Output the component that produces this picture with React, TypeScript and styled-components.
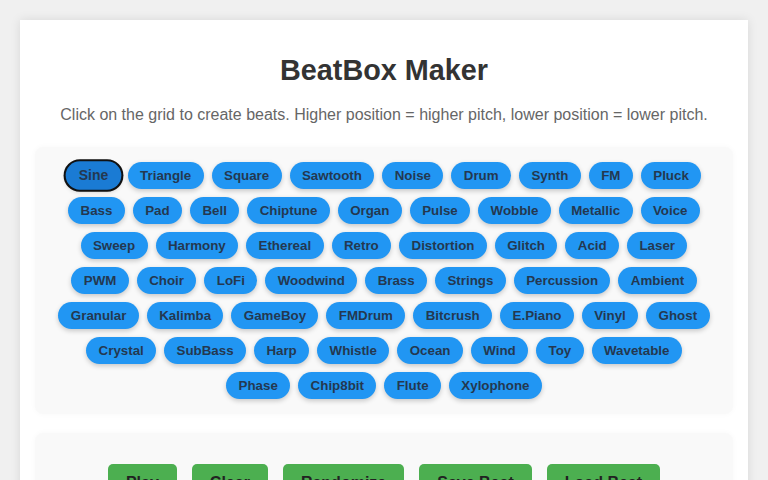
import React from "react";
import styled, { createGlobalStyle } from "styled-components";

const GlobalStyle = createGlobalStyle`
  html, body {
    margin: 0;
    padding: 0;
    background: #f0f0f0;
    font-family: "Liberation Sans", Arial, sans-serif;
  }
  body {
    padding: 20px;
  }
`;

const Card = styled.div`
  background: #fff;
  padding: 15px;
  box-shadow: 0 0 10px rgba(0, 0, 0, 0.1);
  min-height: 600px;
`;

const Title = styled.h1`
  margin: 19px 0;
  text-align: center;
  font-size: 28.8px;
  font-weight: bold;
  color: #333;
  line-height: normal;
`;

const Subtitle = styled.p`
  margin: 0 0 23px;
  text-align: center;
  font-size: 16px;
  color: #666;
  line-height: normal;
`;

const Panel = styled.div<{ $top?: number }>`
  background: #f9f9f9;
  border-radius: 8px;
  padding: ${(p) => p.$top ?? 15}px 20px 15px;
  box-shadow: 0 0 6px rgba(0, 0, 0, 0.03);
`;

const SoundGrid = styled.div`
  display: flex;
  flex-wrap: wrap;
  justify-content: center;
  align-items: center;
  gap: 8px;
`;

const SoundButton = styled.button<{ $active?: boolean }>`
  font-family: "Liberation Sans", Arial, sans-serif;
  font-size: 13.333px;
  font-weight: bold;
  line-height: normal;
  color: #243850;
  background: ${(p) => (p.$active ? "#1a7bd4" : "#2196f3")};
  border: none;
  border-radius: 20px;
  padding: 6px 12.4px;
  box-shadow: ${(p) =>
    p.$active
      ? "0 0 0 2px #111, 0 2px 5px rgba(0,0,0,0.2)"
      : "0 2px 5px rgba(0, 0, 0, 0.2)"};
  transform: ${(p) => (p.$active ? "scale(1.05)" : "none")};
  cursor: pointer;
`;

const Spacer = styled.div`
  height: 19px;
`;

const Controls = styled.div`
  display: flex;
  justify-content: center;
  gap: 15px;
`;

const ControlButton = styled.button`
  font-family: "Liberation Sans", Arial, sans-serif;
  font-size: 16px;
  font-weight: bold;
  line-height: normal;
  color: #222;
  background: #4caf50;
  border: none;
  border-radius: 5px;
  padding: 10px 18px;
  cursor: pointer;
`;

const sounds = [
  "Sine", "Triangle", "Square", "Sawtooth", "Noise", "Drum", "Synth", "FM", "Pluck",
  "Bass", "Pad", "Bell", "Chiptune", "Organ", "Pulse", "Wobble", "Metallic", "Voice",
  "Sweep", "Harmony", "Ethereal", "Retro", "Distortion", "Glitch", "Acid", "Laser",
  "PWM", "Choir", "LoFi", "Woodwind", "Brass", "Strings", "Percussion", "Ambient",
  "Granular", "Kalimba", "GameBoy", "FMDrum", "Bitcrush", "E.Piano", "Vinyl", "Ghost",
  "Crystal", "SubBass", "Harp", "Whistle", "Ocean", "Wind", "Toy", "Wavetable",
  "Phase", "Chip8bit", "Flute", "Xylophone",
];

const controls = ["Play", "Clear", "Randomize", "Save Beat", "Load Beat"];

export default function App() {
  return (
    <>
      <GlobalStyle />
      <Card>
        <Title>BeatBox Maker</Title>
        <Subtitle>
          Click on the grid to create beats. Higher position = higher pitch, lower position = lower pitch.
        </Subtitle>
        <Panel>
          <SoundGrid>
            {sounds.map((s, i) => (
              <SoundButton key={s} $active={i === 0}>
                {s}
              </SoundButton>
            ))}
          </SoundGrid>
        </Panel>
        <Spacer />
        <Panel $top={31}>
          <Controls>
            {controls.map((c) => (
              <ControlButton key={c}>{c}</ControlButton>
            ))}
          </Controls>
        </Panel>
      </Card>
    </>
  );
}
